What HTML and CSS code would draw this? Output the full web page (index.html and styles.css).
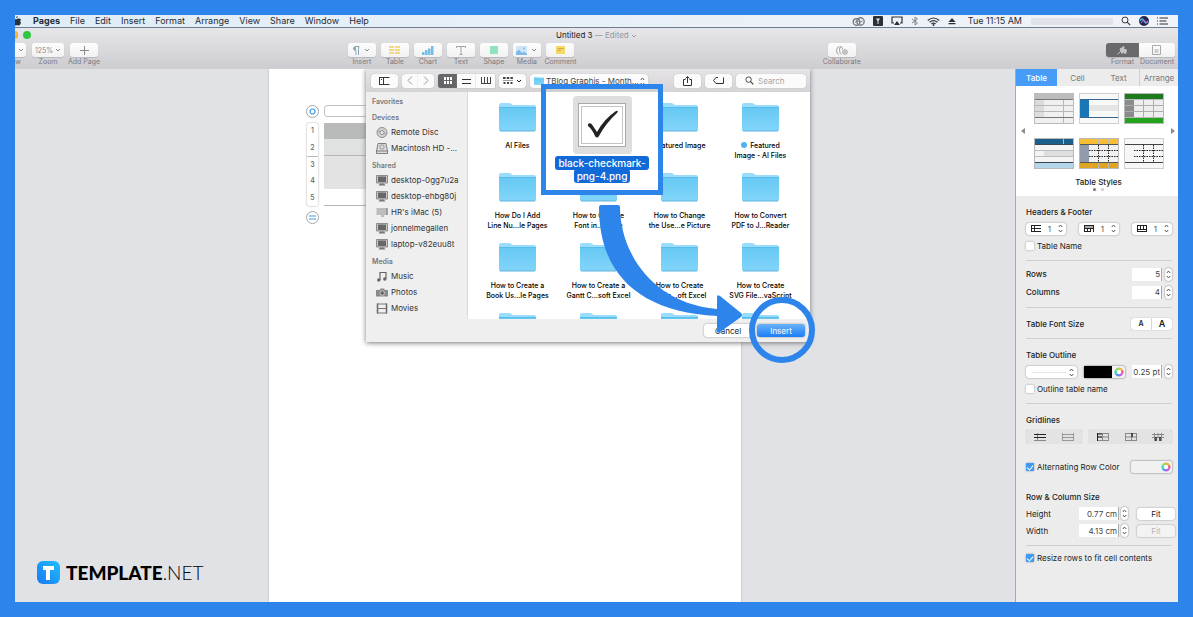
FILE: index.html
```html
<!DOCTYPE html>
<html lang="en">
<head>
  <meta charset="UTF-8" />
  <title>Pages - Insert Image</title>
  <link rel="stylesheet" href="styles.css">
</head>
<body>

<!-- shared icons -->
<svg class="sprite" aria-hidden="true">
  <defs>
    <linearGradient id="folder-fill" x1="0" y1="0" x2="0" y2="1">
      <stop offset="0" stop-color="#66c9f4" />
      <stop offset="1" stop-color="#82d5fa" />
    </linearGradient>
    <symbol id="folder" viewBox="0 0 37 29">
      <path d="M0 2 Q0 0 2 0 H10 Q12 0 13 1.500 L14 2 H35 Q37 2 37 4 V10 H0 Z" fill="#9adcfb" />
      <path d="M0 5 H37 V27 Q37 28 36 28 H1 Q0 28 0 27 Z" fill="url(#folder-fill)" />
      <path d="M0 4.500 H37" stroke="#58bdeb" stroke-width="1" />
      <path d="M1 28 H36" stroke="#5fb4dc" stroke-width="1" />
    </symbol>
    <symbol id="updown" viewBox="0 0 5 9">
      <path d="M.8 3 L2.500 1 L4.200 3 M.8 6 L2.500 8 L4.200 6" fill="none" stroke="#444" stroke-width=".9" />
    </symbol>
    <symbol id="down" viewBox="0 0 6 4">
      <path d="M1 1 L3 3 L5 1" fill="none" stroke="currentColor" stroke-width="1" />
    </symbol>
    <symbol id="screen" viewBox="0 0 12 11">
      <path d="M.5 .5 H11.500 V8 H.5 Z" fill="#c9c9c9" stroke="#777" stroke-width=".8" />
      <path d="M2 1.500 H10 V7 H2 Z" fill="#686868" />
      <path d="M4 8.500 H8 L9.500 10.500 H2.500 Z" fill="#777" />
    </symbol>
    <symbol id="wheel" viewBox="0 0 10 10">
      <g fill="none" stroke-width="3">
        <path d="M5 2 A3 3 0 0 1 7.600 3.500" stroke="#f4b13e" />
        <path d="M7.600 3.500 A3 3 0 0 1 7.600 6.500" stroke="#f0608a" />
        <path d="M7.600 6.500 A3 3 0 0 1 5 8" stroke="#b85cf0" />
        <path d="M5 8 A3 3 0 0 1 2.400 6.500" stroke="#5a8cf5" />
        <path d="M2.400 6.500 A3 3 0 0 1 2.400 3.500" stroke="#43d5c0" />
        <path d="M2.400 3.500 A3 3 0 0 1 5 2" stroke="#93dd55" />
      </g>
      <circle cx="5" cy="5" r="2.200" fill="#fff" />
    </symbol>
    <symbol id="magnifier" viewBox="0 0 10 10">
      <circle cx="4" cy="4" r="3" fill="none" stroke="#3a3a3c" stroke-width="1" />
      <path d="M6.200 6.200 L9.200 9.200" stroke="#3a3a3c" stroke-width="1.200" />
    </symbol>
  </defs>
</svg>

<div class="desktop">
  <nav class="menubar">
    <svg class="apple" width="6" height="10" viewBox="0 0 6 10"><path d="M0 3 Q2 3.500 3 2.600 Q5 2.200 6 3.600 Q4.300 5 6 7 Q5 9.500 3.600 9.500 Q2 9 0 9.500 Z M1 2.200 Q1 .6 2.800 0 Q3 1.800 1 2.200" fill="#26323f" /></svg>
    <a href="#" class="app-name">Pages</a>
    <a href="#">File</a>
    <a href="#">Edit</a>
    <a href="#">Insert</a>
    <a href="#">Format</a>
    <a href="#">Arrange</a>
    <a href="#">View</a>
    <a href="#">Share</a>
    <a href="#">Window</a>
    <a href="#">Help</a>
    <div class="status">
      <svg width="13" height="9" viewBox="0 0 13 9"><g fill="none" stroke="#777d84"><circle cx="4.500" cy="5" r="3.300" stroke-width="1.400" /><circle cx="8.500" cy="4.500" r="3.700" stroke-width="1.400" /><path d="M3 5.500 Q4.500 3 6.500 4.500 T10.500 4" /></g></svg>
      <svg width="10" height="10" viewBox="0 0 10 10"><rect width="10" height="10" rx="1" fill="#2c3036" /><path d="M3 2.500 H7 L5.500 5 V8 H4.500 V5 Z" fill="#dfe4ea" /></svg>
      <svg width="12" height="10" viewBox="0 0 12 10"><path d="M3 7 H1 V1 H11 V7 H9" fill="none" stroke="#2c3036" stroke-width="1.200" /><path d="M6 5 L9 9 H3 Z" fill="#2c3036" /></svg>
      <svg class="bluetooth" width="8" height="10" viewBox="0 0 8 10"><path d="M1 3 L6.500 7 L4 9 V1 L6.500 3 L1 7" fill="none" stroke="#737a82" stroke-width=".9" /></svg>
      <svg width="13" height="9" viewBox="0 0 13 9"><path d="M.8 3.500 Q6.500 -1.500 12.200 3.500 M2.600 5.200 Q6.500 2 10.400 5.200 M4.400 6.900 Q6.500 5.200 8.600 6.900" fill="none" stroke="#2c3036" stroke-width="1.200" /><circle cx="6.500" cy="8" r="1" fill="#2c3036" /></svg>
      <svg width="8" height="8" viewBox="0 0 8 8"><path d="M4 1 L7.500 5 H.5 Z M.5 6 H7.500 V7.200 H.5 Z" fill="#2c3036" /></svg>
      <span class="clock">Tue 11:15 AM</span>
      <span class="redacted"></span>
      <svg width="10" height="10"><use href="#magnifier" /></svg>
      <svg class="siri" width="10" height="10" viewBox="0 0 10 10"><circle cx="5" cy="5" r="5" fill="#28234a" /><path d="M1 5 Q3 1 5 5 T9 5" fill="none" stroke="#41bfe8" stroke-width="1.300" /><path d="M2 7 Q5 2 8 7" fill="none" stroke="#c85bc9" stroke-width="1.200" /></svg>
      <svg width="11" height="8" viewBox="0 0 11 8"><path d="M2.500 1 H11 M2.500 4 H9.500 M2.500 7 H11 M0 1 H1 M0 4 H1 M0 7 H1" stroke="#2c3036" stroke-width="1.100" /></svg>
    </div>
  </nav>

  <header class="toolbar">
    <div class="titlebar">
      <div class="lights"><i class="light yellow"></i><i class="light green"></i></div>
      <h1>Untitled 3 <span>— Edited <svg width="6" height="4"><use href="#down" /></svg></span></h1>
    </div>
    <div class="tools">
      <div class="tool-group">
        <div class="tool tool-cut"><button aria-label="View"><svg width="6" height="4"><use href="#down" /></svg></button><span>w</span></div>
        <div class="tool tool-zoom"><button>125% <svg width="6" height="4"><use href="#down" /></svg></button><span>Zoom</span></div>
        <div class="tool"><button aria-label="Add Page"><svg width="9" height="9" viewBox="0 0 9 9"><path d="M4.500 0 V9 M0 4.500 H9" stroke="#8a8a8a" /></svg></button><span>Add Page</span></div>
      </div>
      <div class="tool-group">
        <div class="tool"><button aria-label="Insert"><svg width="7" height="9" viewBox="0 0 7 9"><path d="M6.500 .5 H3 Q.5 .5 .5 2.500 T3 4.500 V9 M5.500 .5 V9" fill="none" stroke="#8fa6b5" /><path d="M3 .5 V4.500 Q.5 4.500 .5 2.500 T3 .5" fill="#8fa6b5" /></svg><svg width="6" height="4"><use href="#down" /></svg></button><span>Insert</span></div>
        <div class="tool"><button aria-label="Table"><svg width="11" height="8" viewBox="0 0 11 8"><path d="M0 0 H5 V2 H0 Z M6 0 H11 V2 H6 Z M0 3 H5 V5 H0 Z M6 3 H11 V5 H6 Z M0 6 H5 V8 H0 Z M6 6 H11 V8 H6 Z" fill="#f4d879" /></svg></button><span>Table</span></div>
        <div class="tool"><button aria-label="Chart"><svg width="12" height="9" viewBox="0 0 12 9"><path d="M0 6 H2.500 V9 H0 Z M3 4 H5.500 V9 H3 Z M6 2.500 H8.500 V9 H6 Z M9 0 H11.500 V9 H9 Z" fill="#75bce9" /></svg></button><span>Chart</span></div>
        <div class="tool"><button aria-label="Text"><svg width="10" height="9" viewBox="0 0 10 9"><path d="M.5 2 V.5 H9.500 V2 M5 .5 V8.500 M3.500 8.500 H6.500" fill="none" stroke="#a3a3a5" /></svg></button><span>Text</span></div>
        <div class="tool"><button aria-label="Shape"><svg width="8" height="8"><rect width="8" height="8" fill="#91e3bd" /></svg></button><span>Shape</span></div>
        <div class="tool"><button aria-label="Media"><svg width="11" height="9" viewBox="0 0 11 9"><rect width="11" height="9" fill="#cfe6f7" /><path d="M0 9 V6 L3 3.500 L6 7 L8 5.500 L11 8 V9 Z" fill="#7eb9ea" /><circle cx="8" cy="2.500" r="1" fill="#7eb9ea" /></svg><svg width="6" height="4"><use href="#down" /></svg></button><span>Media</span></div>
        <div class="tool"><button aria-label="Comment"><svg width="9" height="8" viewBox="0 0 9 8"><rect width="9" height="8" fill="#f6d868" /><path d="M1.500 2.500 H7.500 M1.500 4.500 H5" stroke="#bd9d3b" stroke-width=".8" /></svg></button><span>Comment</span></div>
      </div>
      <div class="tool-group">
        <div class="tool"><button aria-label="Collaborate"><svg width="12" height="9" viewBox="0 0 12 9"><g fill="none" stroke="#9a9a9c"><path d="M3.500 .5 Q.5 1 .5 4.500 T3 8.500 M5.500 .5 Q3 1 3.500 4.500 T5.500 8.500 M4.500 .5 Q7 1 6.500 3.500" stroke-width=".9" /><circle cx="9" cy="6" r="2.300" /></g><path d="M7.800 6 H10.200 M9 4.800 V7.200" stroke="#9a9a9c" stroke-width=".8" /></svg></button><span>Collaborate</span></div>
      </div>
      <div class="tool-group">
        <div class="tool tool-format"><button aria-label="Format"><svg width="10" height="9" viewBox="0 0 10 9"><path d="M.5 8.500 L4 5 M3 3 L7 .5 L6.500 3 L9.500 4 L8.500 8 L6.500 6 L5 7.500 Z" fill="#c6c6c8" stroke="#c6c6c8" /></svg></button><span>Format</span></div>
        <div class="tool tool-document"><button aria-label="Document"><svg width="9" height="10" viewBox="0 0 9 10"><path d="M.5 .5 H8.500 V9.500 H.5 Z M2.500 5 H6.500 M2.500 7 H6.500" fill="none" stroke="#a9a9ab" /></svg></button><span>Document</span></div>
      </div>
    </div>
  </header>

  <div class="workspace">
    <main class="canvas">
      <div class="page">
        <div class="doc-table">
          <span class="handle"><svg width="7" height="7" viewBox="0 0 7 7"><circle cx="3.500" cy="3.500" r="2.500" fill="none" stroke="#3c9be8" stroke-width="1.200" /></svg></span>
          <div class="col-bar"></div>
          <ol class="row-numbers"><li>1</li><li>2</li><li>3</li><li>4</li><li>5</li></ol>
          <div class="cells"><div class="cell-head"></div><div class="cell-sub"></div><div class="cell-body"></div><div></div></div>
          <span class="handle"><svg width="7" height="5" viewBox="0 0 7 5"><path d="M0 1 H7 M0 4 H7" stroke="#3c9be8" /></svg></span>
        </div>
      </div>

      <div class="logo">
        <svg width="23" height="23" viewBox="0 0 23 23">
          <defs><linearGradient id="logo-fill" x1="1" y1="0" x2="0" y2="1"><stop offset="0" stop-color="#1cc2ff" /><stop offset="1" stop-color="#1b78f2" /></linearGradient></defs>
          <rect width="23" height="23" rx="6" fill="url(#logo-fill)" />
          <rect x="6" y="5" width="11" height="4" fill="#fff" /><rect x="9" y="5" width="4" height="14" fill="#fff" />
        </svg>
        <p><b>TEMPLATE</b>.NET</p>
      </div>
    </main>

    <aside class="inspector">
      <div class="tabs">
        <button class="active">Table</button>
        <button>Cell</button>
        <button>Text</button>
        <button>Arrange</button>
      </div>

      <div class="styles-panel">
        <button class="arrow" aria-label="Previous styles"><svg width="4" height="6" viewBox="0 0 4 6"><path d="M4 0 V6 L0 3 Z" fill="#8a8a8a" /></svg></button>
        <div class="thumbs">
          <svg viewBox="0 0 40 31"><rect width="40" height="31" fill="#bbbdbd" /><path d="M1 7 H39 V24 H1 Z M1 25 H29 V30 H1 Z M30 25 H39 V30 H30 Z" fill="#f0f0f0" /><path d="M1 7 H10 V24 H1 Z" fill="#dcdcdc" /><path d="M1 12.500 H39 M1 18.500 H39 M29.500 7 V30" stroke="#b8b8b8" /><path d="M1 6.500 H39 M1 24.500 H39" stroke="#777" /></svg>
          <svg viewBox="0 0 40 31"><rect width="40" height="31" fill="#cfcfcf" /><path d="M1 1 H39 V30 H1 Z" fill="#f9f9f9" /><path d="M10 12 H39 V18 H10 Z" fill="#e5e5e5" /><path d="M1 6.500 H39 M1 24.500 H39" stroke="#34658f" /><path d="M1 7 H10 V24 H1 Z" fill="#1b76b5" /></svg>
          <svg viewBox="0 0 40 31"><rect width="40" height="31" fill="#b9b9b9" /><path d="M1 1 H39 V6 H1 Z" fill="#1d7a1d" /><path d="M1 7 H39 V24 H1 Z" fill="#eee" /><path d="M1 7 H10 V24 H1 Z" fill="#8b8b8b" /><path d="M1 12.500 H39 M1 18.500 H39 M19.500 7 V24 M29.500 7 V24" stroke="#adadad" /><path d="M1 25 H39 V30 H1 Z" fill="#24a31f" /></svg>
          <svg viewBox="0 0 40 31"><rect width="40" height="31" fill="#b9b9b9" /><path d="M1 1 H29 V6 H1 Z M30 1 H39 V6 H30 Z" fill="#1b5f8d" /><path d="M1 7 H39 V24 H1 Z" fill="#f4f4f4" /><path d="M10 13 H39 V18 H10 Z" fill="#dedede" /><path d="M1 12.500 H39 M1 18.500 H39" stroke="#bdbdbd" /><path d="M1 6.500 H39 M1 24.500 H39" stroke="#3a4650" /><path d="M1 25 H39 V30 H1 Z" fill="#b4d6ea" /></svg>
          <svg viewBox="0 0 40 31"><rect width="40" height="31" fill="#b9b9b9" /><path d="M1 1 H19 V6 H1 Z M20 1 H29 V6 H20 Z M30 1 H39 V6 H30 Z" fill="#f8bf35" /><path d="M1 7 H39 V24 H1 Z" fill="#f1f1f1" /><path d="M1 7 H10 V24 H1 Z" fill="#929bab" /><path d="M10 12.500 H39 M10 18.500 H39 M19.500 7 V24 M29.500 7 V24" stroke="#222" stroke-dasharray="1.500 1" /><path d="M1 6.500 H39 M1 24.500 H39" stroke="#555" /><path d="M1 25 H19 V30 H1 Z M20 25 H29 V30 H20 Z M30 25 H39 V30 H30 Z" fill="#dfa422" /></svg>
          <svg viewBox="0 0 40 31"><rect width="40" height="31" fill="#cfcfcf" /><path d="M1 1 H39 V30 H1 Z" fill="#f7f7f7" /><path d="M10 12.500 H39 M10 18.500 H39 M19.500 7 V24 M29.500 7 V24" stroke="#222" stroke-dasharray="1.500 1" /><path d="M1 6.500 H39 M1 24.500 H39" stroke="#444" /></svg>
        </div>
        <button class="arrow" aria-label="Next styles"><svg width="4" height="6" viewBox="0 0 4 6"><path d="M0 0 V6 L4 3 Z" fill="#8a8a8a" /></svg></button>
        <h2>Table Styles</h2>
        <div class="dots"><i class="on"></i><i></i></div>
      </div>

      <section class="group">
        <div class="row"><h3>Headers &amp; Footer</h3></div>
        <div class="row">
          <button class="pop"><svg width="10" height="7" viewBox="0 0 10 7"><path d="M0 .5 H10 M0 3.500 H10 M0 6.500 H10 M.5 0 V7 M3.500 0 V7" stroke="#222" /></svg>1<svg width="5" height="9"><use href="#updown" /></svg></button>
          <button class="pop"><svg width="10" height="7" viewBox="0 0 10 7"><path d="M0 0 H10 V3 H0 Z" fill="#aaa" /><path d="M0 .5 H10 M0 3.500 H10 M.5 0 V7 M3.500 3 V7 M6.500 3 V7 M9.500 0 V7 M0 6.500 H7" stroke="#222" /></svg>1<svg width="5" height="9"><use href="#updown" /></svg></button>
          <button class="pop"><svg width="10" height="7" viewBox="0 0 10 7"><path d="M0 4.500 H10 M0 6.500 H10 M.5 0 V7 M3.500 0 V4 M6.500 0 V4 M9.500 0 V7 M0 .5 H10" stroke="#222" /></svg>1<svg width="5" height="9"><use href="#updown" /></svg></button>
        </div>
        <div class="row"><label class="check"><input type="checkbox"> Table Name</label></div>
      </section>

      <section class="group group-pair">
        <div class="row tall"><label for="rows">Rows</label><span class="field"><input id="rows" type="text" value="5"><button class="stepper" aria-label="Change rows"><svg width="5" height="9"><use href="#updown" /></svg></button></span></div>
        <div class="row tall"><label for="columns">Columns</label><span class="field"><input id="columns" type="text" value="4"><button class="stepper" aria-label="Change columns"><svg width="5" height="9"><use href="#updown" /></svg></button></span></div>
      </section>

      <section class="group">
        <div class="row"><h3>Table Font Size</h3><span class="segment"><button class="small-a">A</button><button class="big-a">A</button></span></div>
      </section>

      <section class="group">
        <div class="row"><h3>Table Outline</h3></div>
        <div class="row">
          <span class="line-select"><select aria-label="Line style"><option></option></select><svg width="5" height="9"><use href="#updown" /></svg></span>
          <button class="well" aria-label="Outline color"><i class="swatch black"></i><svg width="10" height="10"><use href="#wheel" /></svg></button>
          <span class="field"><input type="text" aria-label="Outline width" value="0.25 pt"><button class="stepper" aria-label="Change outline width"><svg width="5" height="9"><use href="#updown" /></svg></button></span>
        </div>
        <div class="row"><label class="check"><input type="checkbox"> Outline table name</label></div>
      </section>

      <section class="group">
        <div class="row"><h3>Gridlines</h3></div>
        <div class="row">
          <span class="grid-buttons">
            <button aria-label="Body rows"><svg width="12" height="8" viewBox="0 0 12 8"><path d="M3.500 0 V8 M0 7.500 H12" stroke="#888" /><path d="M0 1.500 H12 M0 4.500 H12" stroke="#222" /></svg></button>
            <button aria-label="Header rows"><svg width="12" height="8" viewBox="0 0 12 8"><path d="M.5 0 V8 M11.500 0 V8 M0 1.500 H12 M0 4.500 H12 M0 7.500 H12" stroke="#999" /></svg></button>
          </span>
          <span class="grid-buttons wide">
            <button aria-label="Header column lines"><svg width="12" height="8" viewBox="0 0 12 8"><path d="M5.500 0 V8 M11.500 0 V8 M0 .5 H12 M0 4 H12 M0 7.500 H12" stroke="#888" /><path d="M0 1 H5 M0 4 H5 M.5 0 V8" stroke="#222" /></svg></button>
            <button aria-label="Header row lines"><svg width="12" height="8" viewBox="0 0 12 8"><path d="M.5 0 V8 M11.500 0 V8 M0 .5 H12 M0 4 H12 M0 7.500 H12 M6.500 4 V8" stroke="#888" /><path d="M7 0 V4" stroke="#222" stroke-width="1.500" /></svg></button>
            <button aria-label="Footer lines"><svg width="12" height="8" viewBox="0 0 12 8"><path d="M0 1.500 H12 M0 4.500 H12 M2.500 0 V8 M6 0 V4 M9.500 0 V8" stroke="#888" /><path d="M4 4 V8 M8 4 V8" stroke="#222" stroke-width="1.500" /></svg></button>
          </span>
        </div>
        <div class="row spaced"><label class="check"><input type="checkbox" checked> Alternating Row Color</label>
          <button class="well" aria-label="Row color"><i class="swatch"></i><svg width="10" height="10"><use href="#wheel" /></svg></button></div>
        <div class="row spaced"><h3>Row &amp; Column Size</h3></div>
        <div class="row size"><label for="height">Height</label><span class="field"><input id="height" type="text" value="0.77 cm"><button class="stepper" aria-label="Change height"><svg width="5" height="9"><use href="#updown" /></svg></button></span><button class="fit">Fit</button></div>
        <div class="row size"><label for="width">Width</label><span class="field"><input id="width" type="text" value="4.13 cm"><button class="stepper" aria-label="Change width"><svg width="5" height="9"><use href="#updown" /></svg></button></span><button class="fit" disabled>Fit</button></div>
      </section>

      <section class="group group-last">
        <div class="row"><label class="check"><input type="checkbox" checked> Resize rows to fit cell contents</label></div>
      </section>
    </aside>

    <!-- file picker sheet -->
    <div class="dialog" role="dialog" aria-label="Insert file">
      <div class="dialog-bar">
        <button class="w-sidebar" aria-label="Sidebar"><svg width="11" height="8" viewBox="0 0 11 8"><path d="M.5 .5 H10.500 M.5 7.500 H10.500 M.5 0 V8 M4.500 0 V8 M2 2.500 H3" stroke="#333" /></svg></button>
        <span class="segment nav">
          <button aria-label="Back"><svg width="6" height="9" viewBox="0 0 6 9"><path d="M5 .5 L1 4.500 L5 8.500" fill="none" stroke="#999" /></svg></button><button aria-label="Forward"><svg width="6" height="9" viewBox="0 0 6 9"><path d="M1 .5 L5 4.500 L1 8.500" fill="none" stroke="#999" /></svg></button>
        </span>
        <span class="segment views">
          <button class="active" aria-label="Icons"><svg width="8" height="7" viewBox="0 0 8 7"><path d="M0 0 H2 V3 H0 Z M3 0 H5 V3 H3 Z M6 0 H8 V3 H6 Z M0 4 H2 V7 H0 Z M3 4 H5 V7 H3 Z M6 4 H8 V7 H6 Z" fill="#fff" /></svg></button><button aria-label="List"><svg width="9" height="6" viewBox="0 0 9 6"><path d="M0 1.500 H9 M0 5.500 H9" stroke="#333" /></svg></button><button aria-label="Columns"><svg width="10" height="7" viewBox="0 0 10 7"><path d="M0 6.500 H10 M.5 0 V7 M3.500 0 V7 M6.500 0 V7 M9.500 0 V7" stroke="#444" /></svg></button>
        </span>
        <button class="w-arrange" aria-label="Arrange by"><svg width="10" height="8" viewBox="0 0 10 8"><path d="M0 0 H2.500 V2 H0 Z M3.700 0 H6.200 V2 H3.700 Z M7.400 0 H9.900 V2 H7.400 Z M.5 5 H2.500 V7 H.5 Z M4 5 H6 V7 H4 Z M7.500 5 H9.500 V7 H7.500 Z M0 3 H10 V3.500 H0 Z" fill="#444" /></svg><svg width="6" height="4"><use href="#down" /></svg></button>
        <span class="path">
          <svg class="path-folder" width="10" height="8" viewBox="0 0 37 29"><use href="#folder" width="37" height="29" /></svg>
          <select aria-label="Folder"><option>TBlog Graphis - Month...</option></select>
          <svg class="path-arrows" width="5" height="9"><use href="#updown" /></svg>
        </span>
        <button class="w-share" aria-label="Share"><svg width="9" height="10" viewBox="0 0 9 10"><path d="M2.500 3.500 H.5 V9.500 H8.500 V3.500 H6.500 M4.500 7 V1 M2.500 2.500 L4.500 .5 L6.500 2.500" fill="none" stroke="#333" /></svg></button>
        <button class="w-share" aria-label="Tags"><svg width="11" height="7" viewBox="0 0 11 7"><path d="M3 .5 L.5 3.500 L3 6.500 H10.500 V.5 M3 .5 H5" fill="none" stroke="#333" /></svg></button>
        <label class="search"><svg width="9" height="9"><use href="#magnifier" width="9" height="9" /></svg><input type="search" placeholder="Search" aria-label="Search"></label>
      </div>

      <div class="dialog-body">
        <nav class="sidebar">
          <h4>Favorites</h4>
          <h4>Devices</h4>
          <a href="#"><svg width="12" height="11" viewBox="0 0 12 11"><circle cx="6" cy="5.500" r="5" fill="#d2d2d2" stroke="#777" stroke-width=".8" /><circle cx="6" cy="5.500" r="2" fill="#eee" stroke="#777" stroke-width=".8" /><path d="M2 4 L4 5 M8 6 L10 7" stroke="#888" stroke-width=".7" /></svg>Remote Disc</a>
          <a href="#"><svg width="12" height="11" viewBox="0 0 12 11"><path d="M2 .5 H10 L11.500 8 V10.500 H.5 V8 Z" fill="#ddd" stroke="#666" stroke-width=".8" /><path d="M.5 8 H11.500" stroke="#666" stroke-width=".8" /><circle cx="6" cy="4" r="2.200" fill="none" stroke="#888" stroke-width=".8" /></svg>Macintosh HD -...</a>
          <h4>Shared</h4>
          <a href="#"><svg width="12" height="11"><use href="#screen" /></svg>desktop-0gg7u2a</a>
          <a href="#"><svg width="12" height="11"><use href="#screen" /></svg>desktop-ehbg80j</a>
          <a href="#"><svg width="12" height="11" viewBox="0 0 12 11"><path d="M.5 1 H11.500 V8 H.5 Z M5 8 H8 V10 H5 Z" fill="#bdbdbd" /><path d="M11 1 V8" stroke="#777" /></svg>HR's iMac (5)</a>
          <a href="#"><svg width="12" height="11"><use href="#screen" /></svg>jonnelmegallen</a>
          <a href="#"><svg width="12" height="11"><use href="#screen" /></svg>laptop-v82euu8t</a>
          <h4>Media</h4>
          <a href="#"><svg width="12" height="11" viewBox="0 0 12 11"><path d="M4 9 V1.500 H10 V7.500" fill="none" stroke="#666" stroke-width="1.200" /><circle cx="2.800" cy="9" r="1.700" fill="#666" /><circle cx="8.800" cy="8" r="1.700" fill="#666" /></svg>Music</a>
          <a href="#"><svg width="12" height="11" viewBox="0 0 12 11"><path d="M0 3 H3.500 L4.500 1.500 H8 L9 3 H12 V9.500 H0 Z" fill="#8a8a8a" /><circle cx="6.200" cy="6" r="2.300" fill="#666" stroke="#ddd" stroke-width=".8" /></svg>Photos</a>
          <a href="#"><svg width="12" height="11" viewBox="0 0 12 11"><path d="M1.500 .5 V10.500 M10.500 .5 V10.500" stroke="#666" stroke-width="1.500" /><path d="M1 1 H11 M1 5.500 H11 M1 10 H11" stroke="#777" stroke-width="1" /></svg>Movies</a>
        </nav>
        <ul class="files">
          <li><svg class="folder"><use href="#folder" /></svg>AI Files</li>
          <li></li>
          <li><svg class="folder"><use href="#folder" /></svg>Featured Image</li>
          <li><svg class="folder"><use href="#folder" /></svg><i class="tag"></i>Featured<br>Image - AI Files</li>
          <li><svg class="folder"><use href="#folder" /></svg>How Do I Add<br>Line Nu...le Pages</li>
          <li><svg class="folder"><use href="#folder" /></svg>How to Change<br>Font in... a File</li>
          <li><svg class="folder"><use href="#folder" /></svg>How to Change<br>the Use...e Picture</li>
          <li><svg class="folder"><use href="#folder" /></svg>How to Convert<br>PDF to J...Reader</li>
          <li><svg class="folder"><use href="#folder" /></svg>How to Create a<br>Book Us...le Pages</li>
          <li><svg class="folder"><use href="#folder" /></svg>How to Create a<br>Gantt C...soft Excel</li>
          <li><svg class="folder"><use href="#folder" /></svg>How to Create<br>an En...oft Excel</li>
          <li><svg class="folder"><use href="#folder" /></svg>How to Create<br>SVG File...vaScript</li>
          <li><svg class="folder"><use href="#folder" /></svg></li>
          <li><svg class="folder"><use href="#folder" /></svg></li>
          <li><svg class="folder"><use href="#folder" /></svg></li>
          <li><svg class="folder"><use href="#folder" /></svg></li>
        </ul>
      </div>

      <div class="dialog-footer">
        <button class="cancel">Cancel</button>
        <button class="insert">Insert</button>
      </div>

      <!-- tutorial callouts -->
      <div class="callout-file">
        <div class="picture">
          <svg width="48" height="44" viewBox="0 0 48 44"><rect x=".5" y=".5" width="47" height="43" fill="#fff" stroke="#aaa" /><rect x="3.500" y="3.500" width="41" height="37" fill="#fff" stroke="#c4c4c4" /><path d="M10 21 Q13 19 15 23 L19 29 Q26 16 38 8 Q41 7 39 10 Q28 20 21 33 Q19 36 17 33 Q14 26 10 23 Z" fill="#222" /></svg>
        </div>
        <p><span>black-checkmark-<br>png-4.png</span></p>
      </div>
      <svg class="callout-arrow" width="150" height="135" viewBox="595 202 150 135"><path d="M599 207 Q599 205 601 205 H618 Q620 205 620 207 C620 250 650 303 717 309 V297 Q717 294 720 296 L741 313 Q743 315 741 317 L720 332 Q717 334 717 331 V316 C640 312 599 275 599 207 Z" fill="#2d85ec" /></svg>
      <i class="callout-ring"></i>
    </div>
  </div>
</div>

</body>
</html>
```

FILE: styles.css
```css
* {
  box-sizing: border-box;
}
body {
  margin: 0;
  background: #2d85ec;
  font-family: Inter, "Liberation Sans", sans-serif;
  font-size: 8px;
  line-height: 10px;
  color: #1c1c1e;
}
h1, h2, h3, h4, p, ul, ol {
  margin: 0;
  padding: 0;
  font-size: 8px;
  font-weight: 500;
  list-style: none;
}
a {
  color: inherit;
  text-decoration: none;
}
button, input, select {
  margin: 0;
  padding: 0;
  border: none;
  background: none;
  font: inherit;
  color: inherit;
}
button {
  display: flex;
  align-items: center;
  justify-content: center;
}
svg {
  display: block;
  flex-shrink: 0;
}
.sprite {
  position: absolute;
  width: 0;
  height: 0;
}
.desktop {
  display: flex;
  flex-direction: column;
  min-height: 100vh;
  border: 15px solid #2d85ec;
}

/* menu bar */
.menubar {
  display: flex;
  align-items: center;
  gap: 10px;
  height: 13px;
  padding-right: 10px;
  background: linear-gradient(90deg, #e0edf6, #f0f3f8);
  border-bottom: 1px solid #6c7d8f;
  font-size: 9px;
  color: #1e2c3a;
}
.app-name {
  font-weight: 700;
}
.apple {
  margin-right: 2px;
}
.status {
  display: flex;
  align-items: center;
  gap: 8px;
  margin-left: auto;
}
.redacted {
  width: 82px;
  height: 7px;
  background: #dfe3e9;
}
.clock {
  margin: 0 1px 0 4px;
}

/* window toolbar */
.toolbar {
  height: 41px;
  background: linear-gradient(#e7e6e8, #cdccd0);
}
.titlebar {
  display: grid;
  grid-template-columns: 1fr auto 1fr;
  align-items: center;
  height: 14px;
}
.titlebar h1 {
  font-weight: 400;
}
.titlebar h1 span {
  color: #98989c;
}
.titlebar h1 svg {
  display: inline-block;
}
.lights {
  display: flex;
  gap: 5px;
}
.light {
  width: 8px;
  height: 8px;
  border-radius: 50%;
}
.yellow {
  width: 3px;
  border-radius: 0 4px 4px 0;
  background: #f8b52e;
}
.green {
  background: #2fc641;
}
.tools {
  display: flex;
  justify-content: space-between;
  padding: 1px 3px 0 0;
}
.tool-group {
  display: flex;
}
.tool {
  display: flex;
  flex-direction: column;
  align-items: center;
  min-width: 33px;
  padding: 0 1px;
  font-size: 7px;
  line-height: 9px;
  color: #7b7b7f;
}
.tool button {
  gap: 4px;
  width: 28px;
  height: 14px;
  border-radius: 3px;
  background: linear-gradient(#fdfdfd, #f2f2f3);
  box-shadow: 0 1px 1px #b9b9bc;
  color: #8c8c8f;
}
.tool-cut {
  align-items: flex-start;
  min-width: 16px;
  padding: 0;
}
.tool-cut button {
  width: 11px;
  border-radius: 0 3px 3px 0;
}
.tool-zoom {
  margin-right: 2px;
}
.tool-zoom button {
  gap: 2px;
  width: 32px;
}
.tool-format, .tool-document {
  padding: 0;
}
.tool-format button {
  width: 33px;
  border-radius: 3px 0 0 3px;
  background: #69696b;
}
.tool-document button {
  width: 36px;
  border-radius: 0 3px 3px 0;
}

/* workspace */
.workspace {
  position: relative;
  display: flex;
  flex: 1;
}
.canvas {
  position: relative;
  display: flex;
  flex: 1;
  justify-content: center;
  padding-right: 20px;
  background: #e1e2e6;
}
.page {
  width: 472px;
  background: #fff;
  box-shadow: 0 0 2px #a9a9ad;
  clip-path: inset(0 -2px);
}
.doc-table {
  display: grid;
  grid-template-columns: 13px 240px;
  gap: 5px;
  padding: 36px 0 0 37px;
}
.handle {
  display: flex;
  align-items: center;
  justify-content: center;
  height: 13px;
  border: 1px solid #a5a5a5;
  border-radius: 50%;
}
.col-bar {
  height: 12px;
  border: 1px solid #c2c2c2;
  border-radius: 3px;
}
.row-numbers {
  display: grid;
  grid-template-rows: repeat(5, 1fr);
  height: 83px;
  margin: 0 1px;
  border-radius: 2px;
  box-shadow: 0 0 2px #999;
  font-size: 7px;
  color: #666;
}
.row-numbers li {
  line-height: 16px;
  text-align: center;
}
.row-numbers li:nth-child(2) {
  border-bottom: 1px solid #bbb;
}
.cells {
  display: grid;
  grid-template-rows: 1fr 1fr 2fr 1fr;
  height: 83px;
  border-bottom: 1px solid #b5b5b5;
}
.cell-head {
  background: #b8bbba;
}
.cell-sub {
  background: #e0e1e1;
  border-bottom: 1px solid #b5b5b5;
}
.cell-body {
  background: #e3e3e3;
}
.logo {
  position: absolute;
  left: 22px;
  bottom: 18px;
  display: flex;
  align-items: center;
  gap: 6px;
}
.logo p {
  font-family: Lato, sans-serif;
  font-size: 19px;
  font-weight: 300;
  line-height: 23px;
  color: #000;
}
.logo b {
  font-weight: 900;
}

/* inspector */
.inspector {
  width: 163px;
  background: #ececec;
  border-left: 1px solid #a9a9ac;
}
.tabs {
  display: grid;
  grid-template-columns: 41px 41px 41px 1fr;
  height: 17px;
}
.tabs button {
  color: #77777a;
}
.tabs button:last-child {
  border-left: 1px solid #cfcfcf;
}
.tabs .active {
  background: #479cf7;
  color: #fff;
  font-weight: 500;
}
.styles-panel {
  display: grid;
  grid-template-columns: 13px 1fr 9px;
  align-items: center;
  height: 110px;
  padding: 7px 1px 0 0;
  background: #fff;
  align-content: start;
}
.thumbs {
  display: grid;
  grid-template-columns: repeat(3, 40px);
  gap: 14px 5px;
  justify-content: center;
}
.thumbs svg {
  width: 40px;
  height: 31px;
}
.styles-panel h2 {
  grid-column: 1 / -1;
  margin-top: 8px;
  padding-left: 4px;
  text-align: center;
}
.dots {
  grid-column: 1 / -1;
  display: flex;
  justify-content: center;
  gap: 5px;
  margin-top: 1px;
  padding-left: 4px;
}
.dots i {
  width: 3px;
  height: 3px;
  border-radius: 50%;
  background: #ccc;
}
.dots .on {
  background: #777;
}
.group {
  padding: 7px 0 6px;
  margin: 0 6px 0 10px;
  border-bottom: 1px solid #cfcfcf;
}
.group-pair {
  padding-top: 4px;
}
.group-last {
  padding-top: 3px;
  border: none;
}
.row {
  display: flex;
  align-items: center;
  justify-content: space-between;
  height: 17px;
}
.tall {
  height: 18px;
}
.tall label {
  font-weight: 500;
}
.spaced {
  margin-top: 13px;
}
.check {
  display: flex;
  align-items: center;
  gap: 3px;
}
.check input {
  appearance: none;
  width: 8px;
  height: 8px;
  border-radius: 1px;
  background: #fff;
  box-shadow: 0 0 2px #888;
}
.check input:checked {
  background: #3f9bf8;
}
.check input:checked::after {
  content: "";
  display: block;
  width: 3px;
  height: 5px;
  margin: 1px auto;
  border: solid #fff;
  border-width: 0 1px 1px 0;
  transform: rotate(40deg);
}
.pop {
  justify-content: space-between;
  width: 40px;
  height: 12px;
  padding: 0 3px 0 5px;
  border-radius: 3px;
  background: #fff;
  box-shadow: 0 0 2px #888;
  color: #555;
}
.field {
  display: flex;
  gap: 3px;
}
.field input {
  width: 30px;
  height: 13px;
  padding-right: 1px;
  background: #fff;
  border: 0 solid #aaa;
  border-right-width: 1px;
  text-align: right;
  color: #444;
}
.stepper {
  width: 7px;
  height: 13px;
  border-radius: 4px;
  background: #fff;
  box-shadow: 0 0 2px #777;
}
.segment {
  display: flex;
  gap: 1px;
}
.segment button {
  width: 20px;
  height: 12px;
  background: #fff;
  box-shadow: 0 0 1px #888;
}
.segment button:first-child {
  border-radius: 3px 0 0 3px;
}
.segment button:last-child {
  border-radius: 0 3px 3px 0;
}
.small-a {
  font-size: 7px;
  font-weight: 600;
}
.big-a {
  font-size: 9px;
  font-weight: 600;
}
.line-select {
  position: relative;
}
.line-select select {
  display: block;
  appearance: none;
  width: 51px;
  height: 12px;
  border-radius: 3px;
  background: linear-gradient(#e4e4e4, #e4e4e4) 6px 6px / 34px 1px no-repeat #fff;
  box-shadow: 0 0 2px #888;
}
.line-select svg {
  position: absolute;
  top: 2px;
  right: 3px;
}
.well {
  justify-content: space-between;
  width: 41px;
  height: 12px;
  padding-right: 1px;
  border-radius: 2px;
  background: #f1f1f1;
  box-shadow: 0 0 2px #555;
}
.swatch {
  width: 28px;
  height: 12px;
}
.black {
  background: #000;
}
.grid-buttons {
  display: flex;
  width: 56px;
  height: 13px;
  border-radius: 2px;
  background: #e3e3e3;
  box-shadow: 0 0 1px #999;
}
.grid-buttons.wide {
  width: 83px;
}
.grid-buttons button {
  flex: 1;
}
.size {
  justify-content: flex-start;
}
.size label {
  width: 53px;
}
.size .field {
  gap: 2px;
}
.size .field input {
  width: 40px;
}
.fit {
  width: 38px;
  height: 12px;
  margin: 0 -3px 0 auto;
  border-radius: 3px;
  background: #fff;
  box-shadow: 0 0 2px #888;
}
.fit:disabled {
  background: #f3f3f3;
  color: #b5b5b5;
}

/* dialog */
.dialog {
  position: absolute;
  top: 0;
  left: 351px;
  width: 444px;
  background: #efefef;
  box-shadow: 0 1px 5px #777;
  clip-path: inset(0 -10px -30px);
}
.dialog-bar {
  display: flex;
  align-items: center;
  gap: 4px;
  height: 23px;
  padding: 0 4px 0 5px;
  background: linear-gradient(#e6e4e7, #d5d3d6);
}
.dialog-bar button, .path select, .search {
  height: 14px;
  border-radius: 3px;
  background: #fbfbfb;
  box-shadow: 0 0 1px #999;
}
.w-sidebar {
  width: 27px;
}
.dialog-bar .nav button {
  width: 16px;
}
.dialog-bar .nav {
  gap: 0;
}
.dialog-bar .views {
  gap: 0;
}
.dialog-bar .views button {
  width: 19px;
  border-radius: 0;
}
.dialog-bar .views .active {
  border-radius: 3px 0 0 3px;
  background: #666567;
}
.w-arrange {
  gap: 3px;
  width: 27px;
}
.w-share {
  width: 27px;
}
.path {
  position: relative;
  margin-right: auto;
}
.path select {
  display: block;
  appearance: none;
  width: 118px;
  padding: 0 6px 0 16px;
  font-size: 8px;
  color: #444;
}
.path svg {
  position: absolute;
}
.path-folder {
  top: 3px;
  left: 4px;
}
.path-arrows {
  top: 3px;
  right: 3px;
}
.search {
  display: flex;
  align-items: center;
  gap: 4px;
  width: 70px;
  padding-left: 9px;
}
.search input {
  width: 46px;
  font-size: 8px;
}
.search input::placeholder {
  color: #a5a5a7;
}
.dialog-body {
  display: flex;
  height: 227px;
}
.sidebar {
  width: 102px;
  padding: 4px 0 0 6px;
  border-right: 1px solid #dadada;
}
.sidebar h4 {
  height: 12px;
  margin-top: 4px;
  font-size: 7px;
  line-height: 12px;
  font-weight: 600;
  color: #77777a;
}
.sidebar h4:first-child {
  margin-top: 0;
}
.sidebar a {
  display: flex;
  align-items: center;
  gap: 3px;
  height: 16px;
  padding-left: 4px;
  color: #333;
  white-space: nowrap;
}
.files {
  display: grid;
  flex: 1;
  grid-template-columns: repeat(4, 1fr);
  grid-auto-rows: 70px;
  padding: 11px 9px 0;
  background: #fff;
  overflow: hidden;
  text-align: center;
  font-size: 7px;
  white-space: nowrap;
  color: #000;
}
.folder {
  width: 37px;
  height: 29px;
  margin: 0 auto 9px;
}
.tag {
  display: inline-block;
  width: 6px;
  height: 6px;
  margin-right: 3px;
  border-radius: 50%;
  background: #4db3f5;
}
.dialog-footer {
  display: flex;
  justify-content: flex-end;
  gap: 5px;
  padding: 5px;
}
.dialog-footer button {
  width: 48px;
  height: 13px;
  border-radius: 3px;
  background: #fff;
  box-shadow: 0 0 2px #888;
}
.dialog-footer .insert {
  background: linear-gradient(#69b2f9, #1b7ef6);
  color: #fff;
}

/* callouts */
.callout-file {
  position: absolute;
  top: 15px;
  left: 175px;
  width: 122px;
  height: 111px;
  border: 5px solid #2d85ec;
  background: linear-gradient(#d0cfd1 3px, #fff 3px);
  text-align: center;
}
.picture {
  display: flex;
  align-items: center;
  justify-content: center;
  width: 59px;
  height: 58px;
  margin: 7px auto 3px;
  border-radius: 4px;
  background: #dedede;
}
.callout-file p {
  font-size: 10px;
  line-height: 13px;
  color: #fff;
}
.callout-file span {
  padding: 1px 3px;
  border-radius: 3px;
  background: #116ad8;
  box-decoration-break: clone;
  -webkit-box-decoration-break: clone;
}
.callout-arrow {
  position: absolute;
  top: 133px;
  left: 229px;
}
.callout-ring {
  position: absolute;
  top: 228px;
  left: 383px;
  width: 66px;
  height: 66px;
  border: 6px solid #2d85ec;
  border-radius: 50%;
}
```
